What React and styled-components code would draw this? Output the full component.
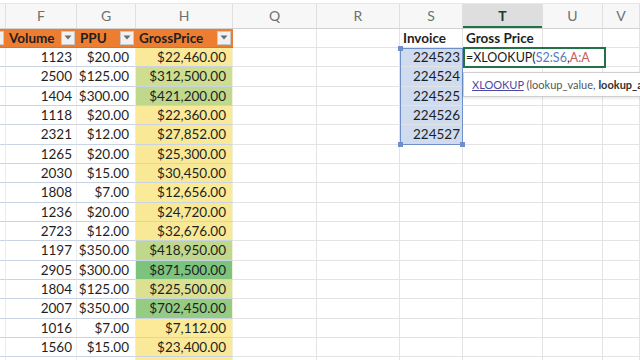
import React from 'react'
import styled, { createGlobalStyle, css } from 'styled-components'

const GlobalStyle = createGlobalStyle`
  html, body {
    margin: 0;
    padding: 0;
    background: #ffffff;
  }
  body {
    font-family: Lato, "Open Sans", "Liberation Sans", sans-serif;
    overflow: hidden;
  }
`

const COLS = '6px 71px 59px 97px 84px 83px 63px 80px 60px 37px'
const HEAD_TOP = 28.5
const ROW_H = 19.35

const rows = [
  [1123, '$20.00', 22460],
  [2500, '$125.00', 312500],
  [1404, '$300.00', 421200],
  [1118, '$20.00', 22360],
  [2321, '$12.00', 27852],
  [1265, '$20.00', 25300],
  [2030, '$15.00', 30450],
  [1808, '$7.00', 12656],
  [1236, '$20.00', 24720],
  [2723, '$12.00', 32676],
  [1197, '$350.00', 418950],
  [2905, '$300.00', 871500],
  [1804, '$125.00', 225500],
  [2007, '$350.00', 702450],
  [1016, '$7.00', 7112],
  [1560, '$15.00', 23400],
  [912, '$12.00', 10944],
]

const invoices = [224523, 224524, 224525, 224526, 224527]

const MIN = 7112
const MAX = 871500
const LOW = [252, 234, 152]
const HIGH = [124, 196, 126]

function scaleColor(v) {
  const t = (v - MIN) / (MAX - MIN)
  const c = LOW.map((l, i) => Math.round(l + (HIGH[i] - l) * t))
  return `rgb(${c[0]}, ${c[1]}, ${c[2]})`
}

const money = (v) =>
  '$' + v.toLocaleString('en-US', { minimumFractionDigits: 2, maximumFractionDigits: 2 })

function Filter() {
  return (
    <FilterButton>
      <svg width="8" height="5" viewBox="0 0 8 5">
        <path d="M0.5 0.5 L7.5 0.5 L4 4.5 Z" fill="#6b6b6b" />
      </svg>
    </FilterButton>
  )
}

function App() {
  return (
    <>
      <GlobalStyle />
      <Sheet>
        <TopStrip />
        <HeaderRow>
          {['', 'F', 'G', 'H', 'Q', 'R', 'S', 'T', 'U', 'V'].map((l, i) => (
            <ColLetter key={i} $active={l === 'T'}>{l}</ColLetter>
          ))}
        </HeaderRow>

        <Row>
          <TableHead><Filter /></TableHead>
          <TableHead>Volume<Filter /></TableHead>
          <TableHead>PPU<Filter /></TableHead>
          <TableHead>GrossPrice<Filter /></TableHead>
          <Cell />
          <Cell />
          <Cell $bold>Invoice</Cell>
          <Cell $bold>Gross Price</Cell>
          <Cell />
          <Cell />
        </Row>

        {rows.map(([vol, ppu, gross], i) => {
          const inv = invoices[i]
          return (
            <Row key={i}>
              <TableCell />
              <TableCell $num>{vol}</TableCell>
              <TableCell $money>{ppu}</TableCell>
              <TableCell $money $fill={scaleColor(gross)}>{money(gross)}</TableCell>
              <Cell />
              <Cell />
              <Cell $num $selected={inv !== undefined}>{inv}</Cell>
              <Cell />
              <Cell />
              <Cell />
            </Row>
          )
        })}

        <SelectionFrame>
          <Handle $pos="tl" />
          <Handle $pos="bl" />
          <Handle $pos="br" />
        </SelectionFrame>

        <Editor>
          =XLOOKUP(<RefA>S2:S6</RefA>,<RefB>A:A</RefB>
        </Editor>

        <Hint>
          <FnName>XLOOKUP</FnName>{' '}
          <HintArgs>(lookup_value, </HintArgs>
          <HintBold>lookup_array</HintBold>
          <HintArgs>, return_array)</HintArgs>
        </Hint>
      </Sheet>
    </>
  )
}

const Sheet = styled.div`
  position: relative;
  width: 640px;
  height: 360px;
  overflow: hidden;
  background: #ffffff;
`

const TopStrip = styled.div`
  height: 4px;
  background: #ffffff;
  border-bottom: 1px solid #e6e6e6;
  box-sizing: border-box;
`

const gridRow = css`
  display: grid;
  grid-template-columns: ${COLS};
`

const HeaderRow = styled.div`
  ${gridRow};
  height: ${HEAD_TOP - 4}px;
  background: #f7f7f7;
  border-bottom: 1px solid #d2d2d2;
  box-sizing: border-box;
`

const ColLetter = styled.div`
  display: flex;
  align-items: center;
  justify-content: center;
  font-size: 14px;
  color: ${(p) => (p.$active ? '#1f3b2a' : '#707070')};
  background: ${(p) => (p.$active ? '#dedede' : 'transparent')};
  border-right: 1px solid #e0e0e0;
  box-shadow: ${(p) => (p.$active ? 'inset 0 -2px 0 #217346' : 'none')};
  font-weight: ${(p) => (p.$active ? 700 : 400)};
`

const Row = styled.div`
  ${gridRow};
  height: ${ROW_H}px;
`

const baseCell = css`
  box-sizing: border-box;
  display: flex;
  align-items: center;
  font-size: 13.5px;
  color: #1f1f1f;
  white-space: nowrap;
  overflow: visible;
  min-width: 0;
`

const Cell = styled.div`
  ${baseCell};
  border-right: 1px solid #e3e3e3;
  border-bottom: 1px solid #e3e3e3;
  justify-content: ${(p) => (p.$num ? 'flex-end' : 'flex-start')};
  padding: 0 ${(p) => (p.$num ? '2px' : '3px')};
  font-weight: ${(p) => (p.$bold ? 700 : 400)};
  background: ${(p) => (p.$selected ? '#cfdcf0' : 'transparent')};
`

const TableHead = styled.div`
  ${baseCell};
  position: relative;
  background: #ed7d31;
  font-weight: 700;
  padding: 0 3px;
  overflow: hidden;
  border-bottom: 1px solid #d77433;
`

const FilterButton = styled.div`
  position: absolute;
  right: 2px;
  top: 2px;
  width: 14px;
  height: 14px;
  box-sizing: border-box;
  background: #f1f1f1;
  border: 1px solid #c9c9c9;
  display: flex;
  align-items: center;
  justify-content: center;
`

const TableCell = styled.div`
  ${baseCell};
  justify-content: flex-end;
  padding-right: ${(p) => (p.$money ? '6px' : p.$num ? '4px' : '0')};
  background: ${(p) => p.$fill || '#ffffff'};
  border-bottom: 1px solid #c9d3e2;
  border-right: 1px solid ${(p) => (p.$fill ? '#eef0d8' : '#ececec')};
`

const SelectionFrame = styled.div`
  position: absolute;
  left: 400px;
  top: ${HEAD_TOP + ROW_H}px;
  width: 63px;
  height: ${ROW_H * 5}px;
  box-sizing: border-box;
  border: 1px solid #6e8fc9;
  pointer-events: none;
`

const handlePos = {
  tl: 'left: -3px; top: -3px;',
  bl: 'left: -3px; bottom: -3px;',
  br: 'right: -3px; bottom: -3px;',
}

const Handle = styled.div`
  position: absolute;
  width: 5px;
  height: 5px;
  background: #6e8fc9;
  ${(p) => handlePos[p.$pos]};
`

const Editor = styled.div`
  position: absolute;
  left: 463px;
  top: ${HEAD_TOP + ROW_H - 1}px;
  width: 143px;
  height: 21px;
  box-sizing: border-box;
  border: 2px solid #217346;
  background: #ffffff;
  padding-left: 1px;
  font-size: 12.5px;
  line-height: 17px;
  color: #1a1a1a;
  white-space: pre;
  overflow: hidden;
`

const RefA = styled.span`
  color: #5b7bc0;
`

const RefB = styled.span`
  color: #c0605a;
`

const Hint = styled.div`
  position: absolute;
  left: 463px;
  top: 72px;
  width: 220px;
  height: 25px;
  box-sizing: border-box;
  border: 1px solid #cfcfcf;
  background: #ffffff;
  box-shadow: 0 1px 3px rgba(0, 0, 0, 0.12);
  padding-left: 8px;
  font-size: 11px;
  line-height: 23px;
  white-space: pre;
  overflow: hidden;
`

const FnName = styled.span`
  color: #4b4aa0;
  text-decoration: underline;
`

const HintArgs = styled.span`
  color: #555555;
`

const HintBold = styled.span`
  color: #333333;
  font-weight: 700;
`

export default App
